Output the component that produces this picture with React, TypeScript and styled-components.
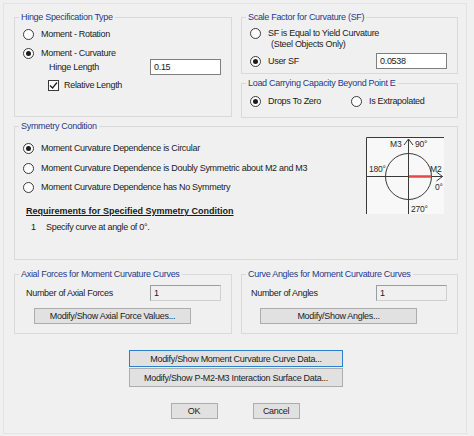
import React from "react";
import styled, { createGlobalStyle } from "styled-components";

const GlobalStyle = createGlobalStyle`
  html, body { margin: 0; padding: 0; background: #f0f0f0; }
  body {
    font-family: "Liberation Sans", Arial, sans-serif;
    font-size: 9px;
    letter-spacing: -0.3px;
    color: #1b1b1b;
  }
  * { box-sizing: border-box; }
`;

const Window = styled.div`
  width: 474px;
  height: 436px;
  padding: 3px 7px 2px 3px;
  background: #f0f0f0;
`;

const Frame = styled.div`
  height: 100%;
  border: 1px solid #e3e3e3;
  padding: 13px 8px 0 10px;
  display: flex;
  flex-direction: column;
`;

const TopRow = styled.div`
  display: grid;
  grid-template-columns: 218px 217px;
  column-gap: 9px;
  height: 101px;
`;

const Column = styled.div`
  display: flex;
  flex-direction: column;
  gap: 9px;
`;

const BottomRow = styled.div`
  display: grid;
  grid-template-columns: 218px 217px;
  column-gap: 9px;
  margin-top: 14px;
`;

const Group = styled.div<{ $h: number; $pt?: number; $pl?: number; $pr?: number }>`
  position: relative;
  height: ${(p) => p.$h}px;
  border: 1px solid #d9d9d9;
  padding: ${(p) => p.$pt ?? 10}px ${(p) => p.$pr ?? 0}px 0 ${(p) => p.$pl ?? 8}px;
  display: flex;
  flex-direction: column;
`;

const GroupTitle = styled.span`
  position: absolute;
  top: -7px;
  left: 4px;
  padding: 0 2px;
  line-height: 13px;
  background: #f0f0f0;
  color: #27398a;
  white-space: nowrap;
`;

const OptionRow = styled.div<{ $mt?: number }>`
  display: flex;
  align-items: center;
  height: 12px;
  margin-top: ${(p) => p.$mt ?? 0}px;
  white-space: nowrap;
`;

const Option = styled.label<{ $w?: number; $indent?: number; $gap?: number }>`
  display: flex;
  align-items: center;
  gap: ${(p) => p.$gap ?? 7}px;
  width: ${(p) => (p.$w ? `${p.$w}px` : "auto")};
  padding-left: ${(p) => p.$indent ?? 0}px;
  line-height: 12px;
`;

const Radio = styled.span<{ $on?: boolean }>`
  display: block;
  flex: none;
  position: relative;
  width: 11px;
  height: 11px;
  border-radius: 50%;
  border: 1px solid #3a3a3a;
  background: #fff;
  &::after {
    content: "";
    display: ${(p) => (p.$on ? "block" : "none")};
    position: absolute;
    left: 2px;
    top: 2px;
    width: 5px;
    height: 5px;
    border-radius: 50%;
    background: #1c1c1c;
  }
`;

const CheckBox = styled.span`
  flex: none;
  width: 11px;
  height: 11px;
  border: 1px solid #3a3a3a;
  background: #fff;
  display: flex;
  align-items: center;
  justify-content: center;
`;

const FieldRow = styled.div<{ $mt?: number; $pl?: number; $spread?: boolean }>`
  display: flex;
  align-items: center;
  justify-content: ${(p) => (p.$spread ? "space-between" : "flex-start")};
  height: 16px;
  margin-top: ${(p) => p.$mt ?? 0}px;
  padding-left: ${(p) => p.$pl ?? 0}px;
  white-space: nowrap;
`;

const FieldLabel = styled.span<{ $w: number }>`
  width: ${(p) => p.$w}px;
  flex: none;
`;

const TextBox = styled.div<{ $muted?: boolean }>`
  width: 71px;
  height: 16px;
  flex: none;
  padding: 0 3px;
  line-height: 14px;
  background: ${(p) => (p.$muted ? "#f0f0f0" : "#ffffff")};
  border: 1px solid ${(p) => (p.$muted ? "#cfcfcf" : "#7f7f7f")};
  border-top-color: ${(p) => (p.$muted ? "#9c9c9c" : "#7f7f7f")};
  border-left-color: ${(p) => (p.$muted ? "#9c9c9c" : "#7f7f7f")};
`;

const TwoLine = styled.div`
  display: flex;
  align-items: flex-start;
  gap: 7px;
  line-height: 11px;
  white-space: nowrap;
`;

const SubLine = styled.div`
  padding-left: 3px;
`;

const SymmetryGroup = styled(Group)`
  flex-direction: row;
  justify-content: space-between;
  margin-top: 8px;
  padding: 0 13px 0 8px;
`;

const SymmetryOptions = styled.div`
  display: flex;
  flex-direction: column;
  padding-top: 15px;
`;

const Requirements = styled.div`
  margin-top: 12px;
  margin-left: 3px;
  font-weight: bold;
  font-size: 9px;
  letter-spacing: 0;
  text-decoration: underline;
  line-height: 12px;
  white-space: nowrap;
`;

const RequirementItem = styled.div`
  display: flex;
  margin-top: 4px;
  margin-left: 8px;
  line-height: 12px;
`;

const ItemNumber = styled.span`
  width: 15px;
`;

const Diagram = styled.svg`
  margin-top: 10px;
  flex: none;
  display: block;
`;

const Button = styled.button<{ $w: number; $h?: number; $focused?: boolean; $mt?: number; $ml?: number }>`
  width: ${(p) => p.$w}px;
  height: ${(p) => p.$h ?? 16}px;
  margin-top: ${(p) => p.$mt ?? 0}px;
  margin-left: ${(p) => p.$ml ?? 0}px;
  padding: 0;
  background: #e1e1e1;
  border: 1px solid ${(p) => (p.$focused ? "#2b7fd0" : "#adadad")};
  font: inherit;
  color: #1b1b1b;
  letter-spacing: -0.3px;
  flex: none;
`;

const ActionStack = styled.div`
  display: flex;
  flex-direction: column;
  align-items: center;
  gap: 1px;
  margin-top: 16px;
`;

const DialogButtons = styled.div`
  display: flex;
  justify-content: center;
  gap: 35px;
  margin-top: 16px;
  padding-right: 2px;
`;

function AxisDiagram() {
  return (
    <Diagram width="78" height="77" viewBox="0 0 78 77">
      <rect x="0" y="0" width="78" height="77" fill="#f8f8f8" />
      <path d="M0.5 77V0.5H78" fill="none" stroke="#3a3a3a" strokeWidth="1" />
      <circle cx="42.5" cy="39.5" r="23" fill="none" stroke="#3a3a3a" strokeWidth="1" />
      <path d="M0 39.5H76.5" stroke="#3a3a3a" strokeWidth="1" />
      <path d="M70.5 35L76.5 39.5L70.5 44" fill="none" stroke="#3a3a3a" strokeWidth="1" />
      <path d="M42.5 77V2" stroke="#3a3a3a" strokeWidth="1" />
      <path d="M38 8L42.5 2L47 8" fill="none" stroke="#3a3a3a" strokeWidth="1" />
      <path d="M43 39.5H65.5" stroke="#e5484d" strokeWidth="2.5" />
      <g fontFamily="Liberation Sans, Arial, sans-serif" fontSize="8.5" fill="#2a2a2a" letterSpacing="-0.2">
        <text x="24" y="9.5">M3</text>
        <text x="49" y="9.5">90°</text>
        <text x="3" y="34.5">180°</text>
        <text x="64" y="34.5">M2</text>
        <text x="69" y="52.5">0°</text>
        <text x="45" y="74.5">270°</text>
      </g>
    </Diagram>
  );
}

export default function App() {
  return (
    <>
      <GlobalStyle />
      <Window>
        <Frame>
          <TopRow>
            <Group $h={100} $pt={10}>
              <GroupTitle>Hinge Specification Type</GroupTitle>
              <OptionRow>
                <Option>
                  <Radio />
                  Moment - Rotation
                </Option>
              </OptionRow>
              <OptionRow $mt={7}>
                <Option>
                  <Radio $on />
                  Moment - Curvature
                </Option>
              </OptionRow>
              <FieldRow $pl={26}>
                <FieldLabel $w={101}>Hinge Length</FieldLabel>
                <TextBox>0.15</TextBox>
              </FieldRow>
              <OptionRow $mt={4}>
                <Option $indent={25} $gap={5}>
                  <CheckBox>
                    <svg width="9" height="9" viewBox="0 0 9 9">
                      <path d="M1 4.5L3.5 7L8 1.5" fill="none" stroke="#1c1c1c" strokeWidth="1.2" />
                    </svg>
                  </CheckBox>
                  Relative Length
                </Option>
              </OptionRow>
            </Group>

            <Column>
              <Group $h={57} $pt={10} $pr={10}>
                <GroupTitle>Scale Factor for Curvature (SF)</GroupTitle>
                <TwoLine>
                  <Radio />
                  <div>
                    <div>SF is Equal to Yield Curvature</div>
                    <SubLine>(Steel Objects Only)</SubLine>
                  </div>
                </TwoLine>
                <FieldRow $mt={3} $spread>
                  <Option>
                    <Radio $on />
                    User SF
                  </Option>
                  <TextBox>0.0538</TextBox>
                </FieldRow>
              </Group>
              <Group $h={35} $pt={11}>
                <GroupTitle>Load Carrying Capacity Beyond Point E</GroupTitle>
                <OptionRow>
                  <Option $w={101}>
                    <Radio $on />
                    Drops To Zero
                  </Option>
                  <Option>
                    <Radio />
                    Is Extrapolated
                  </Option>
                </OptionRow>
              </Group>
            </Column>
          </TopRow>

          <SymmetryGroup $h={134}>
            <GroupTitle>Symmetry Condition</GroupTitle>
            <SymmetryOptions>
              <OptionRow>
                <Option>
                  <Radio $on />
                  Moment Curvature Dependence is Circular
                </Option>
              </OptionRow>
              <OptionRow $mt={8}>
                <Option>
                  <Radio />
                  Moment Curvature Dependence is Doubly Symmetric about M2 and M3
                </Option>
              </OptionRow>
              <OptionRow $mt={7}>
                <Option>
                  <Radio />
                  Moment Curvature Dependence has No Symmetry
                </Option>
              </OptionRow>
              <Requirements>Requirements for Specified Symmetry Condition</Requirements>
              <RequirementItem>
                <ItemNumber>1</ItemNumber>
                <span>Specify curve at angle of 0°.</span>
              </RequirementItem>
            </SymmetryOptions>
            <AxisDiagram />
          </SymmetryGroup>

          <BottomRow>
            <Group $h={60} $pt={10} $pl={11}>
              <GroupTitle>Axial Forces for Moment Curvature Curves</GroupTitle>
              <FieldRow>
                <FieldLabel $w={124}>Number of Axial Forces</FieldLabel>
                <TextBox $muted>1</TextBox>
              </FieldRow>
              <Button $w={157} $mt={7} $ml={8}>
                Modify/Show Axial Force Values...
              </Button>
            </Group>
            <Group $h={60} $pt={10} $pl={9}>
              <GroupTitle>Curve Angles for Moment Curvature Curves</GroupTitle>
              <FieldRow>
                <FieldLabel $w={125}>Number of Angles</FieldLabel>
                <TextBox $muted>1</TextBox>
              </FieldRow>
              <Button $w={157} $mt={7} $ml={9}>
                Modify/Show Angles...
              </Button>
            </Group>
          </BottomRow>

          <ActionStack>
            <Button $w={214} $h={17} $focused>
              Modify/Show Moment Curvature Curve Data...
            </Button>
            <Button $w={214} $h={19}>
              Modify/Show P-M2-M3 Interaction Surface Data...
            </Button>
          </ActionStack>

          <DialogButtons>
            <Button $w={47}>OK</Button>
            <Button $w={47}>Cancel</Button>
          </DialogButtons>
        </Frame>
      </Window>
    </>
  );
}
